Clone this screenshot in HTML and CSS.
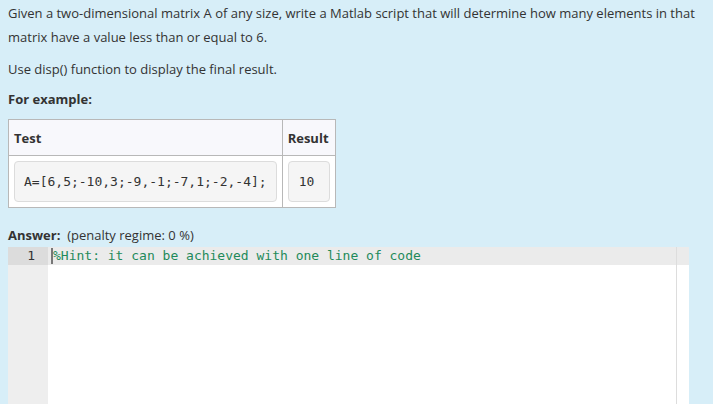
FILE: index.html
```html
<!DOCTYPE html>
<html>
<head>
<meta charset="utf-8">
<link rel="stylesheet" href="styles.css">
</head>
<body>
<div class="qtext">
  <p class="line">Given a two-dimensional matrix A of any size, write a Matlab script that will determine how many elements in that matrix have a value less than or equal to 6.</p>
  <p class="para">Use disp() function to display the final result.</p>
  <p class="example">For example:</p>
  <table class="examples">
    <thead>
      <tr><th class="c-test">Test</th><th class="c-result">Result</th></tr>
    </thead>
    <tbody>
      <tr>
        <td class="c-test"><pre class="box">A=[6,5;-10,3;-9,-1;-7,1;-2,-4];</pre></td>
        <td class="c-result"><pre class="box">10</pre></td>
      </tr>
    </tbody>
  </table>
</div>
<div class="answer">
  <div class="label"><b>Answer:</b>&nbsp; (penalty regime: 0 %)</div>
  <div class="editor">
    <div class="gutter">
      <div class="ln active">1</div>
    </div>
    <div class="code">
      <div class="cline active"><span class="cursor"></span><span class="comment">%Hint: it can be achieved with one line of code</span></div>
      <div class="margin-line"></div>
    </div>
  </div>
</div>
</body>
</html>
```
FILE: styles.css
```css
html, body {
  margin: 0;
  padding: 0;
  background: #d7eef8;
  height: 100%;
  overflow: hidden;
}
body {
  font-family: "Open Sans", "Liberation Sans", sans-serif;
  font-size: 13px;
  color: #333;
  padding: 0 8px;
}
p { margin: 0; }
.line {
  line-height: 24px;
  padding-top: 1px;
}
.para {
  margin-top: 10px;
  line-height: 20px;
}
.example {
  margin-top: 10px;
  font-weight: bold;
  line-height: 20px;
}
.examples {
  margin-top: 10px;
  border-collapse: collapse;
  background: #fff;
}
.examples th {
  background: #f8f8fc;
  border: 1px solid #b8b8b8;
  text-align: left;
  font-weight: bold;
  height: 35px;
  padding: 0 5px;
  font-size: 13px;
}
.examples th.c-result { padding-right: 6px; }
.examples td {
  border: 1px solid #b8b8b8;
  background: #fff;
  padding: 5px;
  vertical-align: top;
}
.box {
  margin: 0;
  background: #f5f5f5;
  border: 1px solid #dcdcdc;
  border-radius: 4px;
  font-family: "DejaVu Sans Mono", monospace;
  font-size: 13px;
  line-height: 19px;
  padding: 10px 9px;
  color: #333;
}
.c-result .box { padding: 10px 10px; }
.answer {
  margin-top: 17px;
}
.label {
  line-height: 20px;
  font-size: 13px;
}
.label b { font-weight: bold; }
.editor {
  margin-top: 2px;
  display: flex;
  width: 681px;
  height: 160px;
  background: #fff;
}
.gutter {
  width: 40px;
  background: #eeeeee;
  flex: none;
}
.ln {
  height: 18px;
  line-height: 18px;
  text-align: right;
  padding-right: 13px;
  font-family: "DejaVu Sans Mono", monospace;
  font-size: 13px;
  color: #333;
}
.ln.active { background: #dcdcdc; }
.code {
  flex: 1;
  position: relative;
}
.cline {
  height: 18px;
  line-height: 18px;
  font-family: "DejaVu Sans Mono", monospace;
  font-size: 13px;
  padding-left: 3px;
  display: flex;
  align-items: center;
}
.cline.active { background: #ebebeb; }
.cursor {
  display: inline-block;
  width: 2px;
  height: 16px;
  background: #777;
}
.comment { color: #1e8a5a; }
.margin-line {
  position: absolute;
  top: 0;
  bottom: 0;
  left: 628px;
  width: 1px;
  background: #dddddd;
}
```
